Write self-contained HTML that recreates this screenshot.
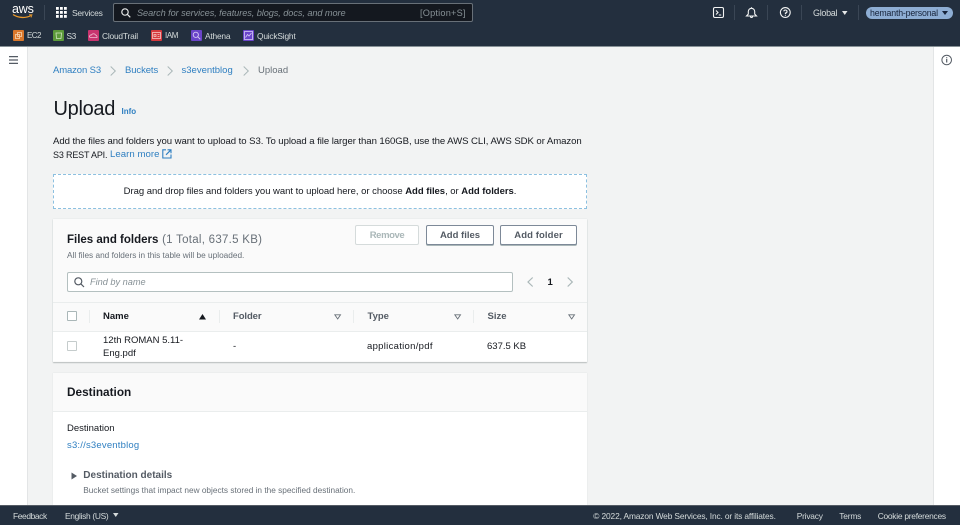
<!DOCTYPE html>
<html><head><meta charset="utf-8"><title>Upload</title>
<style>
html,body{margin:0;padding:0;width:960px;height:525px;overflow:hidden;background:#f2f3f3}
body{font-family:"Liberation Sans",sans-serif;position:relative;font-size:9.5px;color:#16191f;filter:blur(.3px)}
.t{position:absolute;white-space:nowrap;line-height:12px}
.b{position:absolute}
.w{color:#d5dbdb}
.l{color:#2f7fc1}
.g{color:#687078}
.f{font-size:8.4px}
svg{position:absolute;overflow:visible}
.bd{font-weight:bold}
.btn{position:absolute;box-sizing:border-box;border:1px solid #7d8998;border-radius:2px;background:#fff;color:#545b64;font-weight:bold;text-align:center;font-size:9.5px;line-height:18px;padding-top:1px;height:20px;box-shadow:0 1px 0 #aab7b8}
</style></head><body>
<!-- header -->
<div class="b" style="left:0;top:0;width:960px;height:46px;background:#232f3e;border-bottom:1px solid #879196;box-sizing:content-box"></div>
<div class="t" style="left:12px;top:3px;color:#fff;font-size:12.5px;font-weight:normal;letter-spacing:-.2px">aws</div>
<svg style="left:12px;top:14px" width="22" height="6"><path d="M1 0.500C6 4 14 4.500 19 1.500" fill="none" stroke="#ec9a2a" stroke-width="1.300"/><path d="M17 .8L20 .8L19 3.500" fill="none" stroke="#ec9a2a" stroke-width=".8"/></svg>
<div class="b" style="left:44px;top:5px;width:1px;height:15px;background:#3a4655"></div>
<svg style="left:56px;top:7px" width="11" height="11" fill="#fff"><rect x="0" y="0" width="2.800" height="2.800"/><rect x="4" y="0" width="2.800" height="2.800"/><rect x="8" y="0" width="2.800" height="2.800"/><rect x="0" y="4" width="2.800" height="2.800"/><rect x="4" y="4" width="2.800" height="2.800"/><rect x="8" y="4" width="2.800" height="2.800"/><rect x="0" y="8" width="2.800" height="2.800"/><rect x="4" y="8" width="2.800" height="2.800"/><rect x="8" y="8" width="2.800" height="2.800"/></svg>
<div class="t w" style="left:72px;top:7px;font-size:8.500px;letter-spacing:-.25px">Services</div>
<div class="b" style="left:113px;top:3px;width:360px;height:19px;box-sizing:border-box;background:#14181f;border:1px solid #687078;border-radius:2px"></div>
<svg style="left:121px;top:8px" width="10" height="10" fill="none" stroke="#e6e8e8" stroke-width="1.200"><circle cx="4" cy="4" r="3.200"/><path d="M6.300 6.300L9.300 9.300"/></svg>
<div class="t" style="left:137px;top:7px;color:#879196;font-style:italic;font-size:9.200px;letter-spacing:-.075px">Search for services, features, blogs, docs, and more</div>
<div class="t" style="left:420px;top:7px;color:#879196;font-size:9.200px;letter-spacing:.2px">[Option+S]</div>
<!-- right header icons -->
<svg style="left:713px;top:7px" width="12" height="12" fill="none" stroke="#f2f3f3" stroke-width="1.100"><rect x=".5" y=".5" width="10" height="10" rx="1.500"/><path d="M3 3.500L5 5.500L3 7.500M5.800 8H8.200"/></svg>
<div class="b" style="left:734px;top:5px;width:1px;height:15px;background:#3a4655"></div>
<svg style="left:746px;top:7px" width="12" height="12" fill="none" stroke="#f2f3f3" stroke-width="1.100"><path d="M.5 9H10.500L8.700 7V4.500A3.200 3.200 0 0 0 2.300 4.500V7ZM4.500 9.500A1 1 0 0 0 6.500 9.500M5.500 .2V1.300"/></svg>
<div class="b" style="left:767px;top:5px;width:1px;height:15px;background:#3a4655"></div>
<svg style="left:780px;top:7px" width="12" height="12" fill="none" stroke="#f2f3f3" stroke-width="1.100"><circle cx="5.300" cy="5.500" r="4.900"/><path d="M3.800 4.300A1.600 1.500 0 1 1 5.400 6V7M5.400 7.800V8.800"/></svg>
<div class="b" style="left:801px;top:5px;width:1px;height:15px;background:#3a4655"></div>
<div class="t w" style="left:813px;top:7px;font-size:9px;letter-spacing:-.3px">Global</div>
<svg style="left:841.500px;top:11px" width="7" height="5" fill="#e6e8e8"><path d="M0 0H5.500L2.750 4Z"/></svg>
<div class="b" style="left:858px;top:5px;width:1px;height:15px;background:#3a4655"></div>
<div class="b" style="left:866px;top:7px;width:87px;height:12px;border-radius:6px;background:#8eaed4"></div>
<div class="t" style="left:870px;top:7px;font-size:8.800px;color:#16233a;letter-spacing:-.19px">hemanth-personal</div>
<svg style="left:942px;top:11px" width="7" height="5" fill="#16233a"><path d="M0 0H6L3 4Z"/></svg>
<!-- favorites -->
<div class="b" style="left:13px;top:30px;width:11px;height:11px;background:#d9772b;border-radius:1px"></div>
<svg style="left:15px;top:32px" width="8" height="8" fill="none" stroke="#f5d3b0" stroke-width=".8"><rect x="2.500" y=".5" width="4" height="4"/><rect x=".5" y="2.500" width="4" height="4"/></svg>
<div class="t w" style="left:27px;top:30px;font-size:8px;letter-spacing:-.55px">EC2</div>
<div class="b" style="left:53px;top:30px;width:11px;height:11px;background:#5c9a3a;border-radius:1px"></div>
<svg style="left:55px;top:32px" width="8" height="8" fill="none" stroke="#cfe6c0" stroke-width=".8"><path d="M1 1H6.500L6 6.500H1.500Z"/></svg>
<div class="t w f" style="left:66.500px;top:30px;letter-spacing:-.5px">S3</div>
<div class="b" style="left:88px;top:30px;width:11px;height:11px;background:#c9346f;border-radius:1px"></div>
<svg style="left:89px;top:32px" width="9" height="7" fill="none" stroke="#f2bcd2" stroke-width=".8"><path d="M1 5.500H8A2 2 0 0 0 6.500 3A2.200 2.200 0 0 0 2.500 3A1.500 1.500 0 0 0 1 5.500Z"/></svg>
<div class="t w f" style="left:102px;top:30px;letter-spacing:-.2px">CloudTrail</div>
<div class="b" style="left:151px;top:30px;width:11px;height:11px;background:#d5393e;border-radius:1px"></div>
<svg style="left:152px;top:32px" width="9" height="7" fill="none" stroke="#f5c4c4" stroke-width=".8"><rect x=".5" y=".5" width="8" height="6"/><path d="M2 2.500H4V4.500H2ZM5.500 2.500H7.500M5.500 4.500H7.500"/></svg>
<div class="t w" style="left:165px;top:30px;font-size:8px;letter-spacing:-.4px">IAM</div>
<div class="b" style="left:191px;top:30px;width:11px;height:11px;background:#6a44c9;border-radius:1px"></div>
<svg style="left:192px;top:31px" width="9" height="9" fill="none" stroke="#d6caf4" stroke-width=".9"><circle cx="3.800" cy="3.800" r="2.600"/><path d="M5.800 5.800L8.300 8.300"/></svg>
<div class="t w f" style="left:205px;top:30px;letter-spacing:-.2px">Athena</div>
<div class="b" style="left:243px;top:30px;width:11px;height:11px;background:#6a44c9;border-radius:1px"></div>
<svg style="left:244px;top:31px" width="9" height="9" fill="none" stroke="#d6caf4" stroke-width=".8"><rect x=".5" y=".5" width="8" height="8"/><path d="M1.500 6.500L3.500 3.500L5 5L7.500 2"/></svg>
<div class="t w f" style="left:257px;top:30px;letter-spacing:-.2px">QuickSight</div>
<!-- side panels -->
<div class="b" style="left:0;top:47px;width:27px;height:458px;background:#fff;border-right:1px solid #e3e5e6"></div>
<div class="b" style="left:933px;top:47px;width:27px;height:458px;background:#fff;border-left:1px solid #e3e5e6;box-sizing:border-box"></div>
<svg style="left:9px;top:56px" width="9" height="9" stroke="#545b64" stroke-width="1.200"><path d="M0 .6H9M0 4H9M0 7.400H9"/></svg>
<svg style="left:941px;top:54px" width="12" height="12" fill="none" stroke="#545b64" stroke-width="1"><circle cx="5.700" cy="6" r="4.800"/><path d="M5.700 5V8.500M5.700 3.200V4.200" stroke-width="1.200"/></svg>
<!-- breadcrumbs -->
<div class="t l" style="left:53px;top:65px;font-size:9.500px;letter-spacing:-.12px">Amazon S3</div>
<svg style="left:110px;top:66px" width="7" height="10" fill="none" stroke="#aab7b8" stroke-width="1"><path d="M.7 .5L5.300 5L.7 9.500"/></svg>
<div class="t l" style="left:125px;top:65px;font-size:9.500px;letter-spacing:-.1px">Buckets</div>
<svg style="left:167px;top:66px" width="7" height="10" fill="none" stroke="#aab7b8" stroke-width="1"><path d="M.7 .5L5.300 5L.7 9.500"/></svg>
<div class="t l" style="left:181.500px;top:65px;font-size:9.500px">s3eventblog</div>
<svg style="left:243px;top:66px" width="7" height="10" fill="none" stroke="#aab7b8" stroke-width="1"><path d="M.7 .5L5.300 5L.7 9.500"/></svg>
<div class="t g" style="left:258px;top:65px;font-size:9.500px">Upload</div>
<div class="t" style="left:53.500px;top:99px;font-size:20px;line-height:20px;letter-spacing:-.3px">Upload</div>
<div class="t l bd" style="left:121.500px;top:106px;font-size:8px">Info</div>
<div class="t" style="left:53px;top:136px;font-size:9.600px;letter-spacing:-.07px">Add the files and folders you want to upload to S3. To upload a file larger than 160GB, use the AWS CLI, AWS SDK or Amazon</div>
<div class="t" style="left:53px;top:149px;font-size:9px;letter-spacing:-.17px">S3 REST API.</div>
<div class="t l" style="left:110px;top:149px;font-size:9.600px;letter-spacing:.05px">Learn more</div>
<svg style="left:162px;top:149px" width="10" height="10" fill="none" stroke="#2f7fc1" stroke-width="1.100"><path d="M4 .8H.8V9H9V5.500M5.500 .8H9V4.300M9 .8L4 5.800"/></svg>
<!-- drop zone -->
<div class="b" style="left:53px;top:174px;width:534px;height:35px;box-sizing:border-box;background:#fff;border:1px dashed #8cc0e0"></div>
<div class="t" style="left:53px;top:185px;width:534px;text-align:center;font-size:9.500px;letter-spacing:-.03px;line-height:13px">Drag and drop files and folders you want to upload here, or choose <b>Add files</b>, or <b>Add folders</b>.</div>
<!-- panel 1 -->
<div class="b" style="left:53px;top:219px;width:534px;height:143px;background:#fafafa;box-shadow:0 1px 1px #b9bdbd,0 0 1px #d5dbdb"></div>
<div class="t bd" style="left:67px;top:233px;font-size:11.500px;line-height:14px">Files and folders <span class="g" style="font-weight:normal;letter-spacing:.27px;margin-left:.5px">(1 Total, 637.5 KB)</span></div>
<div class="t g" style="left:67px;top:250px;font-size:8.280px">All files and folders in this table will be uploaded.</div>
<div class="btn" style="left:355px;top:225px;width:64px;border-color:#d5dbdb;color:#aab7b8;box-shadow:none;background:#fff;letter-spacing:-.4px">Remove</div>
<div class="btn" style="left:426px;top:225px;width:68px">Add files</div>
<div class="btn" style="left:500px;top:225px;width:77px;letter-spacing:.1px">Add folder</div>
<div class="b" style="left:67px;top:272px;width:446px;height:20px;box-sizing:border-box;background:#fff;border:1px solid #b4c0c0;border-radius:2px"></div>
<svg style="left:74px;top:277px" width="11" height="11" fill="none" stroke="#545b64" stroke-width="1.200"><circle cx="4.300" cy="4.300" r="3.500"/><path d="M6.800 6.800L10 10"/></svg>
<div class="t" style="left:90px;top:276px;font-size:9.200px;font-style:italic;color:#879196">Find by name</div>
<svg style="left:527px;top:277px" width="7" height="10" fill="none" stroke="#aab7b8" stroke-width="1.200"><path d="M5.700 .5L1 5L5.700 9.500"/></svg>
<div class="t bd" style="left:547.500px;top:277px;font-size:9.500px">1</div>
<svg style="left:567px;top:277px" width="7" height="10" fill="none" stroke="#aab7b8" stroke-width="1.200"><path d="M.7 .5L5.300 5L.7 9.500"/></svg>
<div class="b" style="left:53px;top:302px;width:534px;height:1px;background:#eaeded"></div>
<div class="b" style="left:53px;top:331px;width:534px;height:30px;background:#fff;border-top:1px solid #eaeded;box-sizing:border-box"></div>
<!-- table header -->
<div class="b" style="left:67px;top:311px;width:8px;height:8px;background:#fff;border:1px solid #aab7b8;border-radius:1px"></div>
<div class="b" style="left:89px;top:310px;width:1px;height:13px;background:#eaeded"></div>
<div class="t bd" style="left:103px;top:311px;font-size:9.500px">Name</div>
<svg style="left:199px;top:313.500px" width="8" height="6" fill="#16191f"><path d="M0 5.500H7L3.500 0Z"/></svg>
<div class="b" style="left:219px;top:310px;width:1px;height:13px;background:#eaeded"></div>
<div class="t bd" style="left:233px;top:311px;font-size:9.500px;color:#545b64;letter-spacing:-.1px">Folder</div>
<svg style="left:333.500px;top:313.500px" width="8" height="6" fill="none" stroke="#687078" stroke-width=".9"><path d="M.8 .8H6.500L3.700 5Z"/></svg>
<div class="b" style="left:353px;top:310px;width:1px;height:13px;background:#eaeded"></div>
<div class="t bd" style="left:367.500px;top:311px;font-size:9.500px;color:#545b64">Type</div>
<svg style="left:453.500px;top:313.500px" width="8" height="6" fill="none" stroke="#687078" stroke-width=".9"><path d="M.8 .8H6.500L3.700 5Z"/></svg>
<div class="b" style="left:473px;top:310px;width:1px;height:13px;background:#eaeded"></div>
<div class="t bd" style="left:487.500px;top:311px;font-size:9.500px;color:#545b64">Size</div>
<svg style="left:567.500px;top:313.500px" width="8" height="6" fill="none" stroke="#687078" stroke-width=".9"><path d="M.8 .8H6.500L3.700 5Z"/></svg>
<!-- row -->
<div class="b" style="left:67px;top:341px;width:8px;height:8px;background:#fff;border:1px solid #c5cccc;border-radius:1px"></div>
<div class="t" style="left:103px;top:334px;font-size:9.500px;line-height:13px">12th ROMAN 5.11-<br>Eng.pdf</div>
<div class="t" style="left:233px;top:341px;font-size:9.500px">-</div>
<div class="t" style="left:367px;top:341px;font-size:9.500px;letter-spacing:.3px">application/pdf</div>
<div class="t" style="left:487px;top:341px;font-size:9.500px">637.5 KB</div>
<!-- panel 2 -->
<div class="b" style="left:53px;top:373px;width:534px;height:132px;background:#fff;box-shadow:0 0 1px #d5dbdb"></div>
<div class="b" style="left:53px;top:373px;width:534px;height:38px;background:#fafafa;border-bottom:1px solid #eaeded"></div>
<div class="t bd" style="left:67px;top:385px;font-size:11.800px;line-height:14px">Destination</div>
<div class="t" style="left:67px;top:423px;font-size:9.500px">Destination</div>
<div class="t l" style="left:67px;top:440px;font-size:9.500px;letter-spacing:.2px">s3://s3eventblog</div>
<svg style="left:71px;top:471.500px" width="7" height="8" fill="#545b64"><path d="M.5 .5V7.500L6 4Z"/></svg>
<div class="t bd" style="left:83.300px;top:470px;font-size:10px;color:#545b64">Destination details</div>
<div class="t g" style="left:83.300px;top:485px;font-size:8.280px">Bucket settings that impact new objects stored in the specified destination.</div>
<!-- footer -->
<div class="b" style="left:0;top:505px;width:960px;height:20px;background:#232f3e;border-top:1px solid #545b64;box-sizing:border-box"></div>
<div class="t w f" style="left:13px;top:510px;letter-spacing:-.37px">Feedback</div>
<div class="t w f" style="left:65px;top:510px;letter-spacing:-.3px">English (US)</div>
<svg style="left:113px;top:513px" width="7" height="5" fill="#d5dbdb"><path d="M0 0H5.500L2.750 4Z"/></svg>
<div class="t w f" style="left:593.300px;top:510px;letter-spacing:-.14px">© 2022, Amazon Web Services, Inc. or its affiliates.</div>
<div class="t w f" style="left:796.700px;top:510px;letter-spacing:-.2px">Privacy</div>
<div class="t w f" style="left:839.300px;top:510px;letter-spacing:-.2px">Terms</div>
<div class="t w f" style="left:877.700px;top:510px;letter-spacing:-.25px">Cookie preferences</div>
</body></html>
